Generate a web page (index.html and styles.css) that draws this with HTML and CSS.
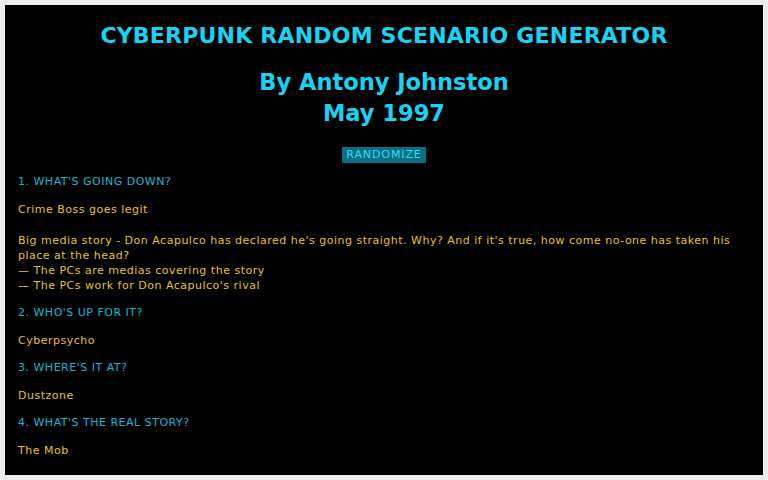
FILE: index.html
```html
<!DOCTYPE html>
<html lang="en">
<head>
  <meta charset="UTF-8">
  <meta name="viewport" content="width=device-width, initial-scale=1.0">
  <title>Cyberpunk Random Scenario Generator</title>
  <link rel="stylesheet" href="styles.css">
</head>
<body>

<main class="screen">
  <h1 class="title">CYBERPUNK RANDOM SCENARIO GENERATOR</h1>
  <h2 class="byline">By Antony Johnston<br>May 1997</h2>

  <div class="actions">
    <button type="button" class="btn-random">RANDOMIZE</button>
  </div>

  <!-- Scenario sections -->
  <section class="step">
    <h3>1. WHAT'S GOING DOWN?</h3>
    <p>Crime Boss goes legit</p>
    <p class="detail">Big media story - Don Acapulco has declared he's going straight. Why? And if it's true, how come no-one has taken his place at the head?<br>
      — The PCs are medias covering the story<br>
      — The PCs work for Don Acapulco's rival</p>
  </section>

  <section class="step">
    <h3>2. WHO'S UP FOR IT?</h3>
    <p>Cyberpsycho</p>
  </section>

  <section class="step">
    <h3>3. WHERE'S IT AT?</h3>
    <p>Dustzone</p>
  </section>

  <section class="step">
    <h3>4. WHAT'S THE REAL STORY?</h3>
    <p>The Mob</p>
  </section>
</main>

</body>
</html>
```

FILE: styles.css
```css
/* General */
body {
  margin: 0;
  padding: 5px;
  background-color: #efefef;
  font-family: 'DejaVu Sans', sans-serif;
}

.screen {
  background-color: #000;
  height: 470px;
  padding: 14px 13px 0;
  box-sizing: border-box;
  overflow: hidden;
}

/* Header */
.title {
  margin: 0;
  text-align: center;
  color: #17d4f5;
  font-size: 22px;
  font-weight: bold;
  letter-spacing: 0.2px;
  line-height: 34px;
}

.byline {
  margin: 14px 0 0;
  text-align: center;
  color: #17d4f5;
  font-size: 22.5px;
  font-weight: bold;
  line-height: 31px;
}

.actions {
  text-align: center;
  margin-top: 14px;
}

.btn-random {
  background-color: #0b6f86;
  color: #3ad8f2;
  border: none;
  padding: 1px 4px;
  font-family: 'DejaVu Sans', sans-serif;
  font-size: 11px;
  letter-spacing: 0.9px;
  line-height: 14px;
  cursor: pointer;
}

/* Sections */
.step h3 {
  margin: 12px 0 0;
  color: #1ab5d6;
  font-size: 11px;
  font-weight: normal;
  letter-spacing: 0.5px;
  line-height: 15px;
}

.actions + .step h3 {
  margin-top: 11px;
}

.step p {
  margin: 13px 0 0;
  color: #e6c41c;
  font-size: 11px;
  letter-spacing: 0.5px;
  line-height: 15px;
}

.step .detail {
  margin-top: 16px;
}
```
